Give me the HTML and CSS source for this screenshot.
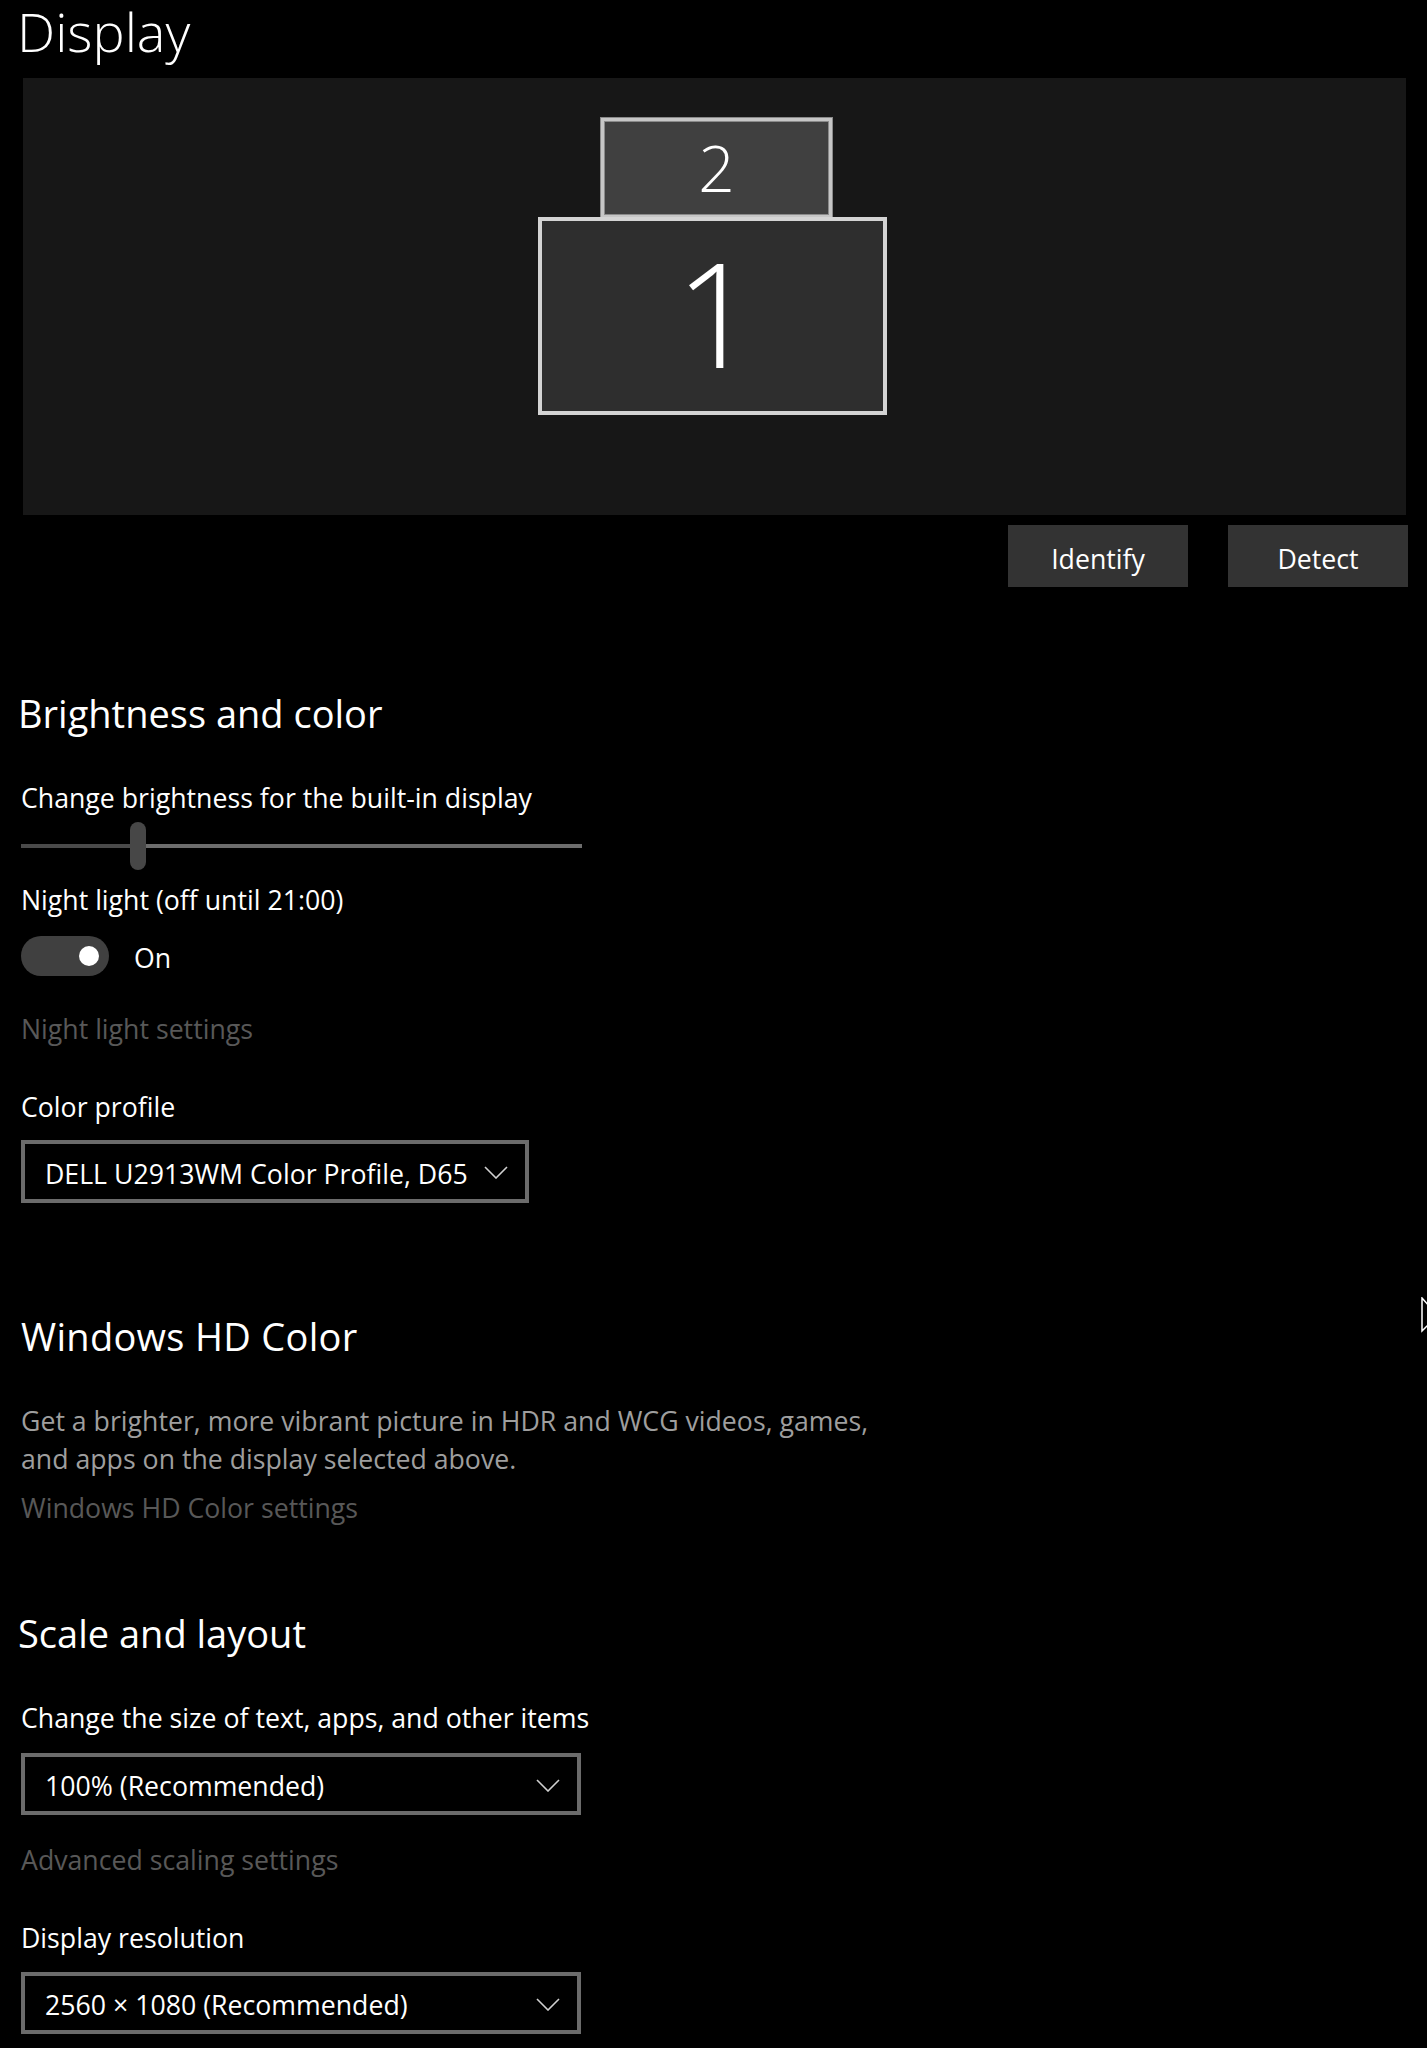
FILE: index.html
```html
<!DOCTYPE html>
<html lang="en">
<head>
<meta charset="utf-8">
<title>Display</title>
<link rel="stylesheet" href="styles.css">
</head>
<body>
<main class="page">
  <h1 class="title">Display</h1>

  <div class="preview">
    <div class="monitor monitor-2"><span class="monitor-num num-2">2</span></div>
    <div class="monitor monitor-1"><span class="monitor-num num-1">1</span></div>
  </div>

  <div class="actions">
    <button class="btn">Identify</button>
    <button class="btn">Detect</button>
  </div>

  <section class="group group-brightness">
    <h2 class="heading">Brightness and color</h2>
    <div class="label label-first">Change brightness for the built-in display</div>
    <div class="slider">
      <div class="slider-track"><div class="slider-fill"></div></div>
      <div class="slider-thumb"></div>
    </div>
    <div class="label label-tight">Night light (off until 21:00)</div>
    <div class="toggle-row">
      <div class="toggle"><div class="toggle-knob"></div></div>
      <span class="toggle-text">On</span>
    </div>
    <div class="link link-night">Night light settings</div>
    <div class="label label-after-link">Color profile</div>
    <div class="select select-profile">
      <span class="select-text">DELL U2913WM Color Profile, D65</span>
      <svg class="chevron" width="24" height="13" viewBox="0 0 24 13"><path d="M1 1 L12 12 L23 1" fill="none" stroke="#d0d0d0" stroke-width="1.6"/></svg>
    </div>
  </section>

  <section class="group group-hd">
    <h2 class="heading heading-hd">Windows HD Color</h2>
    <p class="desc">Get a brighter, more vibrant picture in HDR and WCG videos, games,<br>and apps on the display selected above.</p>
    <div class="link link-hd">Windows HD Color settings</div>
  </section>

  <section class="group group-scale">
    <h2 class="heading">Scale and layout</h2>
    <div class="label label-first">Change the size of text, apps, and other items</div>
    <div class="select select-wide">
      <span class="select-text">100% (Recommended)</span>
      <svg class="chevron" width="24" height="13" viewBox="0 0 24 13"><path d="M1 1 L12 12 L23 1" fill="none" stroke="#d0d0d0" stroke-width="1.6"/></svg>
    </div>
    <div class="link link-adv">Advanced scaling settings</div>
    <div class="label label-after-link">Display resolution</div>
    <div class="select select-wide select-last">
      <span class="select-text">2560 × 1080 (Recommended)</span>
      <svg class="chevron" width="24" height="13" viewBox="0 0 24 13"><path d="M1 1 L12 12 L23 1" fill="none" stroke="#d0d0d0" stroke-width="1.6"/></svg>
    </div>
  </section>

  <div class="cursor">
    <svg width="24" height="36" viewBox="0 0 24 36"><path d="M1 1 L1 34 L8 27 L13 35 L17 33 L12 25 L22 25 Z" fill="#000" stroke="#fff" stroke-width="1.5" stroke-linejoin="miter"/></svg>
  </div>
</main>
</body>
</html>
```

FILE: styles.css
```css
html, body {
  margin: 0;
  padding: 0;
  background: #000;
}

body {
  color: #fff;
  font-family: "Open Sans", "Noto Sans", sans-serif;
  font-size: 26.7px;
  line-height: 38px;
}

.page {
  position: relative;
  width: 1427px;
  height: 2048px;
  box-sizing: border-box;
  padding: 0 19px 0 21px;
  overflow: hidden;
}

.title {
  margin: 0 0 0 -4px;
  padding-top: 1px;
  font-size: 54px;
  font-weight: 300;
  line-height: 60px;
  height: 60px;
}

.preview {
  position: relative;
  margin: 17px 2px 0;
  height: 437px;
  background: #171717;
}

.monitor {
  position: absolute;
  box-sizing: border-box;
  display: flex;
  align-items: center;
  justify-content: center;
}

.monitor-2 {
  left: 578px;
  top: 40px;
  width: 231px;
  height: 100px;
  background: #404040;
  border: 3px solid #c6c6c6;
  box-shadow: 0 0 0 1px #8a8a8a, inset 0 0 0 1px #8a8a8a;
}

.monitor-1 {
  left: 515px;
  top: 139px;
  width: 349px;
  height: 198px;
  background: #2e2e2e;
  border: 4px solid #d4d4d4;
}

.monitor-num {
  font-weight: 300;
  color: #fff;
  line-height: 1;
}

.num-2 {
  font-size: 64px;
}

.num-1 {
  font-size: 145px;
  padding-left: 8px;
  margin-top: -10px;
}

.actions {
  display: flex;
  justify-content: flex-end;
  gap: 40px;
  margin-top: 10px;
}

.btn {
  box-sizing: border-box;
  width: 180px;
  height: 62px;
  padding: 5px 0 0;
  border: 0;
  background: #333333;
  color: #fff;
  font-family: "Open Sans", "Noto Sans", sans-serif;
  font-size: 26.7px;
  line-height: 57px;
}

.group-brightness {
  margin-top: 101px;
}

.group-hd {
  margin-top: 108px;
}

.group-scale {
  margin-top: 81px;
}

.heading {
  margin: 0 0 0 -3px;
  font-size: 38px;
  font-weight: 400;
  line-height: 50px;
}

.heading-hd {
  margin-left: 0;
  letter-spacing: 0.3px;
}

.label {
  color: #fff;
}

.label-first {
  margin-top: 41px;
}

.label-tight {
  margin-top: 11px;
}

.label-after-link {
  margin-top: 40px;
}

.slider {
  position: relative;
  margin-top: 5px;
  width: 561px;
  height: 48px;
  display: flex;
  align-items: center;
}

.slider-track {
  width: 100%;
  height: 4px;
  background: #6d6d6d;
  display: flex;
}

.slider-fill {
  width: 110px;
  height: 100%;
  background: #4a4a4a;
}

.slider-thumb {
  position: absolute;
  left: 109px;
  top: 0;
  width: 16px;
  height: 48px;
  border-radius: 8px;
  background: #474747;
}

.toggle-row {
  display: flex;
  align-items: center;
  gap: 25px;
  margin-top: 17px;
  height: 40px;
}

.toggle {
  box-sizing: border-box;
  width: 88px;
  height: 40px;
  border-radius: 20px;
  background: #404040;
  display: flex;
  align-items: center;
  justify-content: flex-end;
  padding-right: 10px;
}

.toggle-knob {
  width: 20px;
  height: 20px;
  border-radius: 50%;
  background: #fff;
}

.toggle-text {
  padding-top: 3px;
}

.link {
  color: #585858;
}

.link-night {
  margin-top: 34px;
}

.link-hd {
  margin-top: 11px;
}

.link-adv {
  margin-top: 26px;
}

.select {
  box-sizing: border-box;
  margin-top: 14px;
  height: 63px;
  border: 4px solid #6b6b6b;
  display: flex;
  align-items: center;
  justify-content: space-between;
  padding: 4px 17px 0 20px;
}

.select-profile {
  width: 508px;
}

.select-wide {
  width: 560px;
  height: 62px;
  margin-top: 16px;
}

.select-last {
  margin-top: 15px;
}

.select-text {
  white-space: nowrap;
}

.chevron {
  display: block;
  flex: none;
  margin-top: -2px;
}

.desc {
  margin: 41px 0 0;
  color: #9e9e9e;
}

.cursor {
  position: absolute;
  left: 1421px;
  top: 1297px;
  width: 6px;
  height: 36px;
  overflow: hidden;
}

.cursor svg {
  display: block;
}
```
